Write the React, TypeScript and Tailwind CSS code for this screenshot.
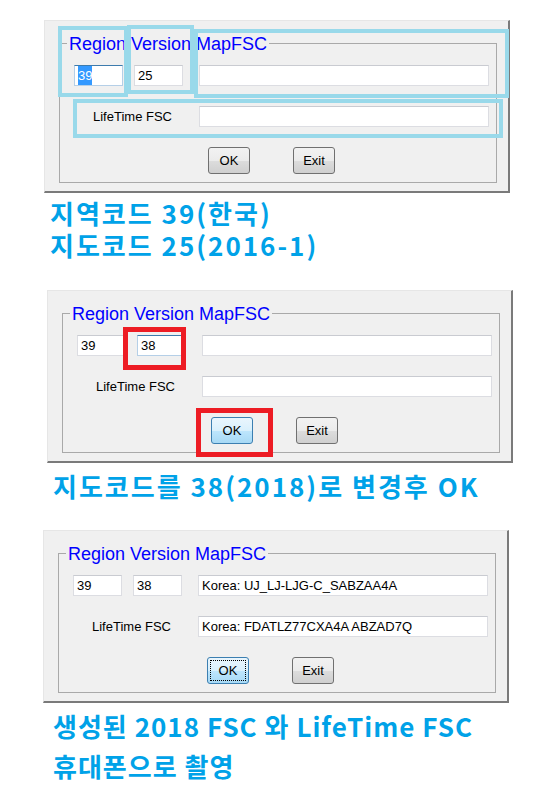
import React from 'react';

const ui = { fontFamily: '"Liberation Sans", Arial, sans-serif' };
const ko = { fontFamily: '"Noto Sans CJK KR", "Noto Sans", sans-serif' };

type BoxProps = {
  w: string;
  focus?: boolean;
  children?: React.ReactNode;
};

const TextBox: React.FC<BoxProps> = ({ w, focus, children }) => (
  <div
    className={`${w} h-[21px] bg-white border flex items-center pl-[3px] text-[13px] text-black whitespace-nowrap overflow-hidden ${
      focus ? 'border-[#b5cfe7] border-t-[#3d7bad]' : 'border-[#dcdde2] border-t-[#c9cbd1]'
    }`}
  >
    {children}
  </div>
);

type BtnProps = {
  label: string;
  hot?: boolean;
  dotted?: boolean;
};

const Button: React.FC<BtnProps> = ({ label, hot, dotted }) => (
  <div
    className={`w-[42px] h-[27px] rounded-[3px] border p-[2px] flex text-[13px] text-black ${
      hot
        ? 'border-[#3c7fb1] bg-[linear-gradient(to_bottom,#eaf6fd_0%,#d9f0fc_50%,#bee6fd_50%,#a7d9f5_100%)]'
        : 'border-[#707070] bg-[linear-gradient(to_bottom,#f2f2f2_0%,#ebebeb_50%,#dddddd_50%,#cfcfcf_100%)]'
    }`}
  >
    <span
      className={`flex-1 flex items-center justify-center ${dotted ? 'border border-dotted border-black' : ''}`}
    >
      {label}
    </span>
  </div>
);

type PanelProps = {
  className: string;
  region: React.ReactNode;
  version: React.ReactNode;
  mapFsc?: string;
  lifeFsc?: string;
  regionFocus?: boolean;
  versionFocus?: boolean;
  okHot?: boolean;
  okDotted?: boolean;
  children?: React.ReactNode;
};

const Panel: React.FC<PanelProps> = ({
  className,
  region,
  version,
  mapFsc,
  lifeFsc,
  regionFocus,
  versionFocus,
  okHot,
  okDotted,
  children,
}) => (
  <div
    className={`relative w-[466px] h-[173px] bg-[#f0f0f0] border-t border-l border-t-[#e6e6e6] border-l-[#e6e6e6] border-r-2 border-b-2 border-r-[#7a7a7a] border-b-[#7a7a7a] pt-[22px] pl-[14px] ${className}`}
    style={ui}
  >
    {/* group box */}
    <div className="relative w-[438px] h-[140px] border border-[#a9a9a9] pt-[21px] pl-[14px]">
      <span className="absolute -top-[9px] left-[7px] px-[2px] bg-[#f0f0f0] text-[18px] leading-[18px] text-[#0000ff]">
        Region Version MapFSC
      </span>

      <div className="flex">
        <TextBox w="w-[49px]" focus={regionFocus}>{region}</TextBox>
        <div className="ml-[11px]">
          <TextBox w="w-[49px]" focus={versionFocus}>{version}</TextBox>
        </div>
        <div className="ml-[16px]">
          <TextBox w="w-[290px]">{mapFsc}</TextBox>
        </div>
      </div>

      <div className="flex items-center mt-[20px]">
        <span className="w-[125px] pl-[19px] text-[13px] text-black">LifeTime FSC</span>
        <TextBox w="w-[290px]">{lifeFsc}</TextBox>
      </div>

      <div className="flex mt-[20px] pl-[134px] gap-[43px]">
        <Button label="OK" hot={okHot} dotted={okDotted} />
        <Button label="Exit" />
      </div>
    </div>
    {children}
  </div>
);

const Caption: React.FC<{ className: string; children: React.ReactNode }> = ({ className, children }) => (
  <div className={`text-[26px] font-bold text-[#00a2e8] ${className}`} style={ko}>
    {children}
  </div>
);

export default function App() {
  return (
    <div className="w-[556px] h-[794px] bg-white overflow-hidden pt-[20px]">
      <Panel
        className="ml-[44px]"
        region={<span className="bg-[#3399ff] text-white">39</span>}
        version="25"
        regionFocus
      >
        {/* highlight frames */}
        <div className="absolute left-[13px] top-[5px] w-[70px] h-[71px] border-4 border-[#99d9ea]" />
        <div className="absolute left-[82px] top-[4px] w-[67px] h-[69px] border-4 border-[#99d9ea]" />
        <div className="absolute left-[149px] top-[8px] w-[315px] h-[69px] border-4 border-[#99d9ea]" />
        <div className="absolute left-[28px] top-[78px] w-[430px] h-[39px] border-4 border-[#99d9ea]" />
      </Panel>

      <Caption className="ml-[50px] mt-[4px] leading-[32px] tracking-[2px]">
        <div>지역코드 39(한국)</div>
        <div>지도코드 25(2016-1)</div>
      </Caption>

      <Panel className="ml-[47px] mt-[29px]" region="39" version="38" versionFocus okHot>
        <div className="absolute left-[75px] top-[36px] w-[63px] h-[43px] border-[5px] border-[#ed1c24]" />
        <div className="absolute left-[148px] top-[117px] w-[77px] h-[49px] border-[5px] border-[#ed1c24]" />
      </Panel>

      <Caption className="ml-[53px] mt-[7px] leading-[32px] tracking-[2px]">
        <div>지도코드를 38(2018)로 변경후 OK</div>
      </Caption>

      <Panel
        className="ml-[43px] mt-[28px]"
        region="39"
        version="38"
        mapFsc="Korea: UJ_LJ-LJG-C_SABZAA4A"
        lifeFsc="Korea: FDATLZ77CXA4A ABZAD7Q"
        okHot
        okDotted
      />

      <Caption className="ml-[53px] mt-[3px] leading-[40px] tracking-[1px]">
        <div>생성된 2018 FSC 와 LifeTime FSC</div>
        <div>휴대폰으로 촬영</div>
      </Caption>
    </div>
  );
}
